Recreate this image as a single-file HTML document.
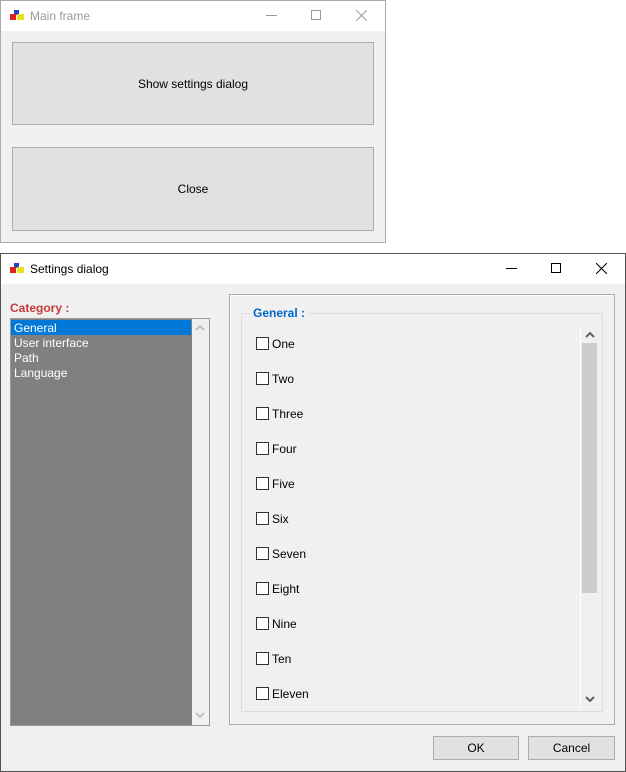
<!DOCTYPE html>
<html><head><style>
*{margin:0;padding:0;box-sizing:border-box}
body{width:626px;height:772px;background:#fff;position:relative;overflow:hidden;font-family:"Liberation Sans",Arial,sans-serif;font-size:12px;color:#000}
.a{position:absolute}
.btn{position:absolute;background:#e1e1e1;border:1px solid #adadad;display:flex;align-items:center;justify-content:center;font-size:12px}
.cb{position:absolute;left:256px;width:13px;height:13px;border:1px solid #333;background:#fff}
.cl{position:absolute;left:272px;font-size:12px}
.ico{position:absolute;width:16px;height:12px}
</style></head><body>
<div class="a" style="left:0;top:0;width:386px;height:243px;border:1px solid #aaa;background:#f0f0f0"></div>
<div class="a" style="left:1px;top:1px;width:384px;height:30px;background:#fff"></div>
<svg class="ico" style="left:9px;top:10px" viewBox="0 0 16 12"><rect x="5" y="0" width="5" height="5" fill="#2244cc"/><rect x="1" y="4" width="6" height="6" fill="#dd2222"/><rect x="8" y="4" width="7" height="6" fill="#e8e020"/></svg>
<div class="a" style="left:30px;top:9px;color:#999;font-size:12px">Main frame</div>
<div class="a" style="left:266px;top:15px;width:11px;height:1px;background:#999"></div>
<div class="a" style="left:311px;top:10px;width:10px;height:10px;border:1px solid #999"></div>
<svg class="a" style="left:356px;top:10px" width="11" height="11"><path d="M0 0L11 11M11 0L0 11" stroke="#999" stroke-width="1"/></svg>
<div class="btn" style="left:12px;top:42px;width:362px;height:83px">Show settings dialog</div>
<div class="btn" style="left:12px;top:147px;width:362px;height:84px">Close</div>

<div class="a" style="left:0;top:253px;width:626px;height:519px;border:1px solid #555;background:#f0f0f0"></div>
<div class="a" style="left:1px;top:254px;width:624px;height:30px;background:#fff"></div>
<svg class="ico" style="left:9px;top:263px" viewBox="0 0 16 12"><rect x="5" y="0" width="5" height="5" fill="#2244cc"/><rect x="1" y="4" width="6" height="6" fill="#dd2222"/><rect x="8" y="4" width="7" height="6" fill="#e8e020"/></svg>
<div class="a" style="left:30px;top:262px;font-size:12px">Settings dialog</div>
<div class="a" style="left:506px;top:268px;width:11px;height:1px;background:#000"></div>
<div class="a" style="left:551px;top:263px;width:10px;height:10px;border:1px solid #000"></div>
<svg class="a" style="left:596px;top:263px" width="11" height="11"><path d="M0 0L11 11M11 0L0 11" stroke="#000" stroke-width="1"/></svg>

<div class="a" style="left:10px;top:301px;color:#c8393b;font-weight:bold;font-size:12px">Category :</div>
<div class="a" style="left:10px;top:318px;width:200px;height:408px;border:1px solid #999;background:#808080"></div>
<div class="a" style="left:192px;top:319px;width:17px;height:406px;background:#f0f0f0"></div>
<svg class="a" style="left:195px;top:324px" width="10" height="8"><path d="M1 6L5 2L9 6" stroke="#c0c0c0" stroke-width="2" fill="none"/></svg>
<svg class="a" style="left:195px;top:711px" width="10" height="8"><path d="M1 2L5 6L9 2" stroke="#c0c0c0" stroke-width="2" fill="none"/></svg>
<div class="a" style="left:11px;top:320px;width:180px;height:15px;background:#0078d7"></div>
<div class="a" style="left:14px;top:321px;color:#fff;line-height:15px">General<br>User interface<br>Path<br>Language</div>

<div class="a" style="left:229px;top:294px;width:386px;height:431px;border:1px solid #aaa;box-shadow:inset 1px 1px 0 #fff"></div>
<div class="a" style="left:241px;top:313px;width:362px;height:399px;border:1px solid #dcdcdc"></div>
<div class="a" style="left:249px;top:306px;padding:0 4px;background:#f0f0f0;color:#0066cc;font-weight:bold;font-size:12px">General :</div>
<div class="a" style="left:580px;top:326px;width:18px;height:383px;background:#f0f0f0;border-left:1px solid #fff"></div>
<div class="a" style="left:582px;top:343px;width:15px;height:250px;background:#cdcdcd"></div>
<svg class="a" style="left:585px;top:331px" width="10" height="8"><path d="M1 6L5 2L9 6" stroke="#606060" stroke-width="2" fill="none"/></svg>
<svg class="a" style="left:585px;top:695px" width="10" height="8"><path d="M1 2L5 6L9 2" stroke="#606060" stroke-width="2" fill="none"/></svg>

<div class="cb" style="top:337px"></div><div class="cl" style="top:337px">One</div>
<div class="cb" style="top:372px"></div><div class="cl" style="top:372px">Two</div>
<div class="cb" style="top:407px"></div><div class="cl" style="top:407px">Three</div>
<div class="cb" style="top:442px"></div><div class="cl" style="top:442px">Four</div>
<div class="cb" style="top:477px"></div><div class="cl" style="top:477px">Five</div>
<div class="cb" style="top:512px"></div><div class="cl" style="top:512px">Six</div>
<div class="cb" style="top:547px"></div><div class="cl" style="top:547px">Seven</div>
<div class="cb" style="top:582px"></div><div class="cl" style="top:582px">Eight</div>
<div class="cb" style="top:617px"></div><div class="cl" style="top:617px">Nine</div>
<div class="cb" style="top:652px"></div><div class="cl" style="top:652px">Ten</div>
<div class="cb" style="top:687px"></div><div class="cl" style="top:687px">Eleven</div>

<div class="btn" style="left:433px;top:736px;width:86px;height:24px">OK</div>
<div class="btn" style="left:528px;top:736px;width:87px;height:24px">Cancel</div>
</body></html>
